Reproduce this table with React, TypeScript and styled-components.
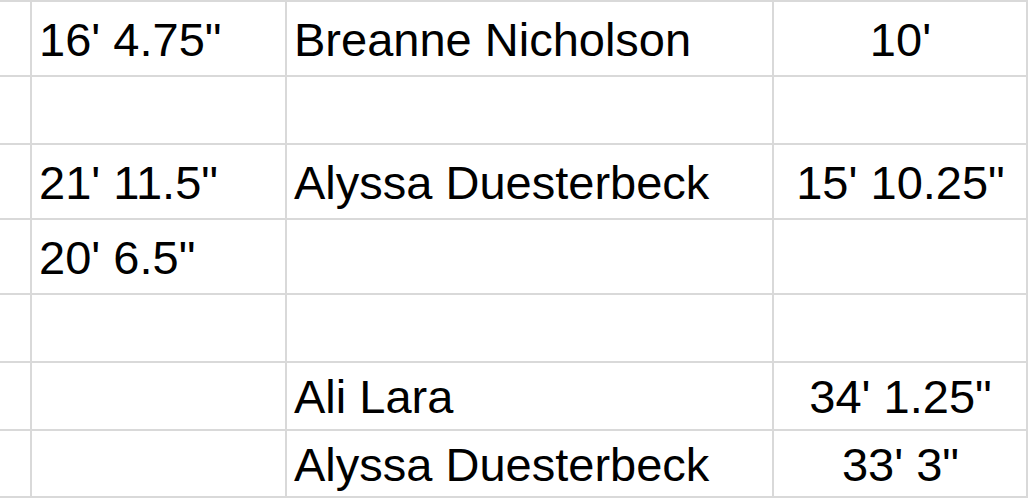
import { Fragment } from 'react';
import styled, { createGlobalStyle } from 'styled-components';

const GlobalStyle = createGlobalStyle`
  html, body {
    margin: 0;
    padding: 0;
    background: #ffffff;
  }
  body {
    font-family: "Liberation Sans", Arial, sans-serif;
  }
`;

type CellProps = {
  align?: 'left' | 'center';
};

const Sheet = styled.div`
  display: grid;
  grid-template-columns: 30px 253px 485px 252px;
  grid-template-rows: 73px 66px 73px 73px 66px 66px 65px;
  gap: 2px;
  padding: 2px 2px 2px 0;
  width: max-content;
  background: #d9d9d9;
`;

const Cell = styled.div<CellProps>`
  display: flex;
  align-items: center;
  justify-content: ${({ align }) => (align === 'center' ? 'center' : 'flex-start')};
  padding: 1px 6px 0 7px;
  background: #ffffff;
  color: #000000;
  font-size: 47px;
  line-height: normal;
  white-space: nowrap;
  overflow: hidden;
`;

const rows: [string, string, string][] = [
  ['16\' 4.75"', 'Breanne Nicholson', '10\''],
  ['', '', ''],
  ['21\' 11.5"', 'Alyssa Duesterbeck', '15\' 10.25"'],
  ['20\' 6.5"', '', ''],
  ['', '', ''],
  ['', 'Ali Lara', '34\' 1.25"'],
  ['', 'Alyssa Duesterbeck', '33\' 3"'],
];

export default function App() {
  return (
    <>
      <GlobalStyle />
      <Sheet>
        {rows.map((row, i) => (
          <Fragment key={i}>
            <Cell />
            <Cell>{row[0]}</Cell>
            <Cell>{row[1]}</Cell>
            <Cell align="center">{row[2]}</Cell>
          </Fragment>
        ))}
      </Sheet>
    </>
  );
}
